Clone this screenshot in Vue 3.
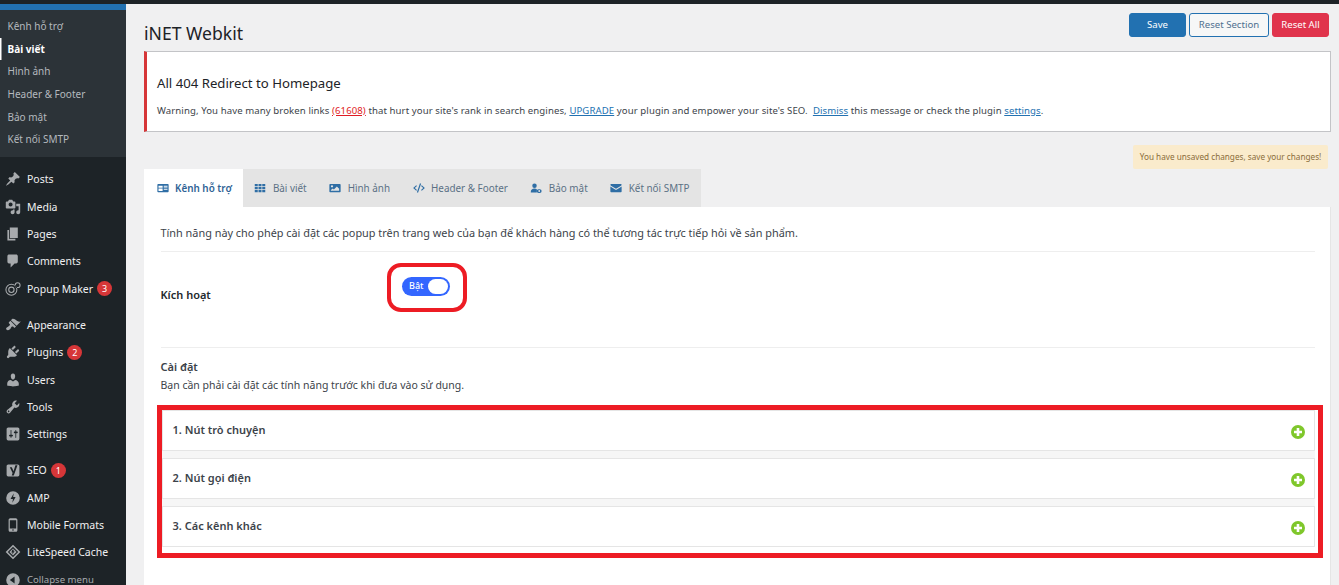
<script setup>
const sub = [
  { label: 'Kênh hỗ trợ' },
  { label: 'Bài viết', active: true },
  { label: 'Hình ảnh' },
  { label: 'Header & Footer' },
  { label: 'Bảo mật' },
  { label: 'Kết nối SMTP' }
]
const P = {
  posts: 'M10.44 3.02l1.82-1.82 6.36 6.35-1.83 1.82c-1.05-.68-2.48-.57-3.41.36l-.75.75c-.92.93-1.04 2.35-.35 3.41l-1.83 1.82-2.41-2.41-2.8 2.79c-.42.42-3.38 2.71-3.8 2.29s1.86-3.39 2.28-3.81l2.79-2.79L4.1 9.36l1.83-1.82c1.05.69 2.48.57 3.4-.36l.75-.75c.93-.92 1.05-2.35.36-3.41z',
  media: 'M13 11V4c0-.55-.45-1-1-1h-1.67L9 1H5L3.67 3H2c-.55 0-1 .45-1 1v7c0 .55.45 1 1 1h10c.55 0 1-.45 1-1zM7 4.5c1.38 0 2.5 1.12 2.5 2.5S8.38 9.5 7 9.5 4.5 8.38 4.5 7 5.62 4.5 7 4.5zM14 6h5v10.5c0 1.38-1.12 2.5-2.5 2.5S14 17.88 14 16.5s1.12-2.5 2.5-2.5c.17 0 .34.02.5.05V9h-3V6zm-4 8.05V13h2v3.5c0 1.38-1.12 2.5-2.5 2.5S7 17.88 7 16.5 8.12 14 9.5 14c.17 0 .34.02.5.05z',
  pages: 'M6 15V2h10v13H6zm-1 1h8v2H3V5h2v11z',
  comments: 'M5 2h9c1.1 0 2 .9 2 2v7c0 1.1-.9 2-2 2h-2l-5 5v-5H5c-1.1 0-2-.9-2-2V4c0-1.1.9-2 2-2z',
  popup: 'M8 3.500a7.500 7.500 0 1 0 0 15 7.500 7.500 0 0 0 0-15zm0 1.300a6.200 6.200 0 1 1 0 12.400A6.200 6.200 0 0 1 8 4.800zM8 7a4 4 0 1 0 0 8 4 4 0 0 0 0-8zm0 1.300a2.700 2.700 0 1 1 0 5.400 2.700 2.700 0 0 1 0-5.400zM15.800 1.500a3.700 3.700 0 1 0 0 7.400 3.700 3.700 0 0 0 0-7.400zm0 1.300a2.400 2.400 0 1 1 0 4.800 2.400 2.400 0 0 1 0-4.800z',
  appearance: 'M14.48 11.06L7.41 3.99l1.5-1.5c.5-.56 2.3-.47 3.51.32 1.21.8 1.43 1.28 2.91 2.1 1.18.64 2.45 1.26 4.45.85zm-.71.71L6.7 4.7 4.93 6.47c-.39.39-.39 1.02 0 1.41l1.06 1.06c.39.39.39 1.03 0 1.42-.6.6-1.43 1.11-2.21 1.69-.35.26-.7.53-1.01.84C1.43 13.23.91 14.96 1.99 16.03c1.07 1.07 2.8.56 4.16-.79.29-.3.58-.65.83-1.01.59-.78 1.09-1.61 1.69-2.21.39-.39 1.03-.39 1.42 0l1.06 1.06c.39.39 1.02.39 1.41 0z',
  plugins: 'M13.11 4.36L9.87 7.6 8 5.73l3.24-3.24c.35-.34 1.05-.2 1.56.32.52.51.66 1.21.31 1.55zm-8 1.77l.91-1.12 9.01 9.01-1.19.84c-.71.71-2.63 1.16-3.82 1.16H6.14L4.9 17.26c-.59.59-1.54.59-2.12 0-.59-.58-.59-1.53 0-2.12l1.24-1.24v-3.88c0-1.13.4-3.19 1.09-3.89zm7.26 3.97l3.24-3.24c.34-.35 1.04-.21 1.55.31.52.51.66 1.21.31 1.55l-3.24 3.25z',
  users: 'M10 9.25c-2.27 0-2.73-3.44-2.73-3.44C7 4.02 7.82 2 9.97 2c2.16 0 2.98 2.02 2.71 3.81 0 0-.41 3.44-2.68 3.44zm0 2.57L12.72 10c2.39 0 4.52 2.33 4.52 4.53v2.49s-3.65 1.13-7.24 1.13c-3.65 0-7.24-1.13-7.24-1.13v-2.49c0-2.25 1.94-4.48 4.47-4.48z',
  tools: 'M16.68 9.77c-1.34 1.34-3.3 1.67-4.95.99l-5.41 6.52c-.99.99-2.59.99-3.58 0s-.99-2.59 0-3.57l6.52-5.42c-.68-1.65-.35-3.61.99-4.95 1.28-1.28 3.12-1.62 4.72-1.06l-2.89 2.89 2.82 2.82 2.86-2.87c.53 1.58.18 3.39-1.08 4.65zM3.81 16.21c.4.39 1.04.39 1.43 0 .4-.4.4-1.04 0-1.43-.39-.4-1.03-.4-1.43 0-.39.39-.39 1.03 0 1.43z',
  settings: 'M18 16V4c0-1.1-.9-2-2-2H4c-1.1 0-2 .9-2 2v12c0 1.1.9 2 2 2h12c1.1 0 2-.9 2-2zM8 11h1c.55 0 1 .45 1 1s-.45 1-1 1H8v1.5c0 .28-.22.5-.5.5s-.5-.22-.5-.5V13H6c-.55 0-1-.45-1-1s.45-1 1-1h1V5.5c0-.28.22-.5.5-.5s.5.22.5.5V11zm5-2h-1c-.55 0-1-.45-1-1s.45-1 1-1h1V5.5c0-.28.22-.5.5-.5s.5.22.5.5V7h1c.55 0 1 .45 1 1s-.45 1-1 1h-1v5.500c0 .28-.22.5-.5.5s-.5-.22-.5-.5V9z',
  seo: 'M4 3h12c1.100 0 2 .9 2 2v11c0 1.100-.9 2-2 2H4c-1.100 0-2-.9-2-2V5c0-1.100.9-2 2-2zM13 4h2.600L11 16.800H8.400l1.100-3L6 6.500h2.500l2.200 5z',
  amp: 'M10 1.500a8.500 8.500 0 1 0 0 17 8.500 8.500 0 0 0 0-17zm-.8 14.300l.7-4.600H7.400c-.3 0-.4-.2-.3-.4l3.700-6.500.1.100-.7 4.500h2.500c.3 0 .4.200.3.400z',
  mobile: 'M6.500 1.500h7c1.100 0 2 .9 2 2v13c0 1.100-.9 2-2 2h-7c-1.100 0-2-.9-2-2v-13c0-1.100.9-2 2-2zM6 4v10.500h8V4zm4 11.200a1 1 0 1 0 0 2 1 1 0 0 0 0-2z',
  speed: 'M10 .8L19.200 10 10 19.200.8 10zm0 2.700L3.500 10l6.500 6.500 6.500-6.500zm0 2L14.500 10 10 14.500 5.500 10zm-.8 1.800L8 10.500h1.500l-.5 2.500 3-3.800h-1.500l.5-2z',
  collapse: 'M10 1.500a8.500 8.500 0 1 0 0 17 8.500 8.500 0 0 0 0-17zm2 4v9L6 10z'
}
const groups = [
  [
    { label: 'Posts', icon: 'posts' },
    { label: 'Media', icon: 'media' },
    { label: 'Pages', icon: 'pages' },
    { label: 'Comments', icon: 'comments' },
    { label: 'Popup Maker', icon: 'popup', badge: 3 }
  ],
  [
    { label: 'Appearance', icon: 'appearance' },
    { label: 'Plugins', icon: 'plugins', badge: 2 },
    { label: 'Users', icon: 'users' },
    { label: 'Tools', icon: 'tools' },
    { label: 'Settings', icon: 'settings' }
  ],
  [
    { label: 'SEO', icon: 'seo', badge: 1 },
    { label: 'AMP', icon: 'amp' },
    { label: 'Mobile Formats', icon: 'mobile' },
    { label: 'LiteSpeed Cache', icon: 'speed' }
  ]
]
const tabs = [
  { label: 'Kênh hỗ trợ', active: true, d: 'M1.500 2.500h13c.6 0 1 .4 1 1v9c0 .6-.4 1-1 1h-13c-.6 0-1-.4-1-1v-9c0-.6.4-1 1-1zM2 5v2.500h5.500V5zm7 0v1.200h5V5zM9 7.200v1.200h5V7.200zM2 8.500V12h5.500V8.500zM9 9.500v1.200h5V9.500z' },
  { label: 'Bài viết', d: 'M1 2.500h4v3H1zM6 2.500h4v3H6zM11 2.500h4v3h-4zM1 6.500h4v3H1zM6 6.500h4v3H6zM11 6.500h4v3h-4zM1 10.500h4v3H1zM6 10.500h4v3H6zM11 10.500h4v3h-4z' },
  { label: 'Hình ảnh', d: 'M1.500 2.500h13c.6 0 1 .4 1 1v9c0 .6-.4 1-1 1h-13c-.6 0-1-.4-1-1v-9c0-.6.4-1 1-1zM4 4.300a1.500 1.500 0 1 0 0 3 1.500 1.500 0 0 0 0-3zM2.500 11.500h11V9L10.500 6 6.500 10 5 8.500l-2.500 2.300z' },
  { label: 'Header & Footer', d: 'M9.300 1.800l1.500.4-4.100 12-1.500-.4zM4.300 4.300l1 1.100L2.400 8l2.900 2.600-1 1.100L.2 8zM11.700 4.300L15.800 8l-4.100 3.700-1-1.100L13.600 8l-2.900-2.600z' },
  { label: 'Bảo mật', d: 'M6 2a3 3 0 1 1 0 6 3 3 0 0 1 0-6zM1 13.500c0-3 2-4.700 5-4.700 1.200 0 2.300.3 3.100.8V14H1.500c-.3 0-.5-.2-.5-.5zM13 9.500a2.500 2.500 0 0 1 0 5h-1.500a2.500 2.500 0 0 1 0-5zm-.7 1.300a1.200 1.200 0 1 0 0 2.400 1.200 1.200 0 0 0 0-2.400z' },
  { label: 'Kết nối SMTP', d: 'M1.500 2.500h13c.7 0 1 .5 1 1.100 0 .5-.3 1-.8 1.300L8.600 8.800c-.4.200-.8.200-1.200 0L1.300 4.900C.8 4.600.5 4.100.5 3.600c0-.6.300-1.100 1-1.100zM.5 6l6.300 4c.7.500 1.700.5 2.400 0L15.500 6v6.500c0 .6-.4 1-1 1h-13c-.6 0-1-.4-1-1z' }
]
const rows = ['1. Nút trò chuyện', '2. Nút gọi điện', '3. Các kênh khác']
</script>

<template>
  <div class="page">
    <div class="topbar"></div>
    <div class="body">
      <aside class="side">
        <div class="current"></div>
        <ul class="submenu">
          <li v-for="s in sub" :key="s.label" :class="{ on: s.active }">{{ s.label }}</li>
        </ul>
        <div class="groups">
          <ul v-for="(g, i) in groups" :key="i" class="group">
            <li v-for="m in g" :key="m.label" class="item">
              <svg class="mi" viewBox="0 0 20 20"><path :d="P[m.icon]" fill-rule="evenodd" /></svg>
              <span>{{ m.label }}</span>
              <b v-if="m.badge" class="badge">{{ m.badge }}</b>
            </li>
          </ul>
          <div class="item collapse">
            <svg class="mi" viewBox="0 0 20 20"><path :d="P.collapse" fill-rule="evenodd" /></svg>
            <span>Collapse menu</span>
          </div>
        </div>
      </aside>

      <main class="main">
        <header class="head">
          <h1>iNET Webkit</h1>
          <div class="actions">
            <button class="btn save">Save</button>
            <button class="btn reset">Reset Section</button>
            <button class="btn all">Reset All</button>
          </div>
        </header>

        <section class="notice">
          <h2>All 404 Redirect to Homepage</h2>
          <p>
            Warning, You have many broken links <a class="red">(61608)</a> that hurt your site's rank in search engines,
            <a>UPGRADE</a> your plugin and empower your site's SEO.&nbsp; <a>Dismiss</a> this message or check the plugin
            <a>settings</a>.
          </p>
        </section>

        <div class="unsaved-row">
          <div class="unsaved">You have unsaved changes, save your changes!</div>
        </div>

        <nav class="tabs">
          <div v-for="t in tabs" :key="t.label" class="tab" :class="{ on: t.active }">
            <svg viewBox="0 0 16 16"><path :d="t.d" fill-rule="evenodd" /></svg>
            <span>{{ t.label }}</span>
          </div>
        </nav>

        <section class="panel">
          <p class="intro">Tính năng này cho phép cài đặt các popup trên trang web của bạn để khách hàng có thể tương tác trực tiếp hỏi về sản phẩm.</p>
          <div class="field">
            <label>Kích hoạt</label>
            <div class="switch-wrap">
              <div class="switch"><span>Bật</span><i></i></div>
              <div class="mark mark-round"></div>
            </div>
          </div>
          <div class="setup">
            <h3>Cài đặt</h3>
            <p>Bạn cần phải cài đặt các tính năng trước khi đưa vào sử dụng.</p>
          </div>
          <div class="accordion">
            <div v-for="r in rows" :key="r" class="row">
              <strong>{{ r }}</strong>
              <svg class="plus" viewBox="0 0 14 14">
                <circle cx="7" cy="7" r="7" fill="#7fc72b" />
                <path d="M7 3v8M3 7h8" stroke="#fff" stroke-width="2.600" fill="none" />
              </svg>
            </div>
            <div class="mark mark-box"></div>
          </div>
        </section>
      </main>
    </div>
  </div>
</template>

<style>
html, body { margin: 0; overflow: hidden; background: #f0f0f1; }
</style>

<style scoped>
* { box-sizing: border-box; }
.page {
  width: 1339px; height: 585px; overflow: hidden; display: flex; flex-direction: column;
  font-family: "Noto Sans", "Open Sans", sans-serif; color: #3c434a; background: #f0f0f1;
}
ul { list-style: none; margin: 0; padding: 0; }
.topbar { height: 4px; background: #1d2327; flex: none; }
.body { flex: 1; display: flex; min-height: 0; }

.side { width: 126px; flex: none; background: #1d2327; display: flex; flex-direction: column; }
.current { height: 6px; background: #2271b1; flex: none; }
.submenu { background: #2c3338; height: 147px; padding-top: 5.300px; flex: none; }
.submenu li {
  height: 22.600px; line-height: 22.600px; padding-left: 7.500px; font-size: 10px; color: #b4b9be;
}
.submenu li.on { color: #fff; font-weight: 700; box-shadow: inset 1.500px 0 0 #fff; }
.groups { padding-top: 8.800px; }
.group { padding-bottom: 9px; }
.item {
  height: 27.300px; display: flex; align-items: center; font-size: 10.500px; color: #f0f0f1; position: relative;
}
.mi { width: 16px; height: 16px; margin: 0 6px 0 5px; fill: #a7aaad; flex: none; }
.badge {
  width: 15px; height: 15px; border-radius: 50%; background: #d63638; color: #fff;
  font-size: 9px; font-weight: 400; line-height: 15px; text-align: center; margin-left: 4px;
}
.collapse { color: #a7aaad; font-size: 9.600px; margin-top: -9px; }

.main { flex: 1; min-width: 0; padding: 0 8px 0 18px; display: flex; flex-direction: column; }
.head { height: 47px; display: flex; justify-content: space-between; flex: none; }
h1 { margin: 17px 0 0; font-size: 17.600px; line-height: 24px; font-weight: 400; color: #1d2327; }
.actions { display: flex; gap: 3px; padding: 9px 2px 0 0; }
.btn {
  height: 24px; font: 9.600px/1 "Noto Sans", sans-serif; border-radius: 3px; border: 1px solid; padding: 0;
}
.save { width: 57px; background: #2271b1; border-color: #2271b1; color: #fff; }
.reset { width: 80px; background: #f6f7f7; border-color: #2271b1; color: #50708f; }
.all { width: 57px; background: #e0344c; border-color: #e0344c; color: #fff; }

.notice {
  height: 81px; flex: none; background: #fff; border: 1px solid #c3c4c7; border-left: 3px solid #d63638;
  padding: 21px 0 0 10px;
}
.notice h2 { margin: 0; font-size: 13.200px; line-height: 20px; font-weight: 400; color: #1d2327; }
.notice p { margin: 10px 0 0; font-size: 9.600px; letter-spacing: .088px; line-height: 16px; color: #3c434a; }
.notice a { color: #2271b1; text-decoration: underline; }
.notice a.red { color: #e01b24; }

.unsaved-row { display: flex; justify-content: flex-end; padding: 13px 3px 0 0; flex: none; }
.unsaved {
  width: 195px; height: 24px; background: #faebcc; color: #8a6d3b; font-size: 8.200px; line-height: 24px;
  text-align: center; border-radius: 2px; white-space: nowrap;
}

.tabs { display: flex; align-self: flex-start; background: #e4e4e4; height: 38px; flex: none; }
.tab { display: flex; align-items: center; gap: 6.500px; padding: 0 11.250px; font-size: 9.900px; color: #5b7184; height: 38px; }
.tab svg { width: 12px; height: 12px; fill: #2f6ea5; flex: none; }
.tab.on { background: #fff; color: #2f6395; font-weight: 600; padding-left: 12.500px; }

.panel {
  flex: 1; min-height: 0; background: #fff; border-right: 1px solid #e5e5e5;
  padding: 0 15px 0 16.500px;
}
.intro {
  margin: 0; height: 45px; padding-top: 18px; font-size: 10.880px; line-height: 16px; color: #3c434a;
  border-bottom: 1px solid #eee;
}
.field { height: 96px; display: flex; align-items: flex-start; border-bottom: 1px solid #eee; }
.field label { width: 241.500px; margin-top: 35px; font-size: 11px; line-height: 16px; font-weight: 600; color: #23282d; }
.switch-wrap { position: relative; margin-top: 25px; }
.switch {
  width: 48px; height: 19px; border-radius: 10px; background: #3366ff; position: relative;
  color: #fff; font-size: 9px; line-height: 17px; padding-left: 7px; font-weight: 500;
}
.switch i { position: absolute; right: 2px; top: 2px; width: 20px; height: 15px; border-radius: 8px; background: #fff; }
.mark { position: absolute; border: 4.500px solid #ed1c24; pointer-events: none; }
.mark-round { left: -15px; right: -17px; top: -14px; bottom: -16px; border-radius: 14px; }
.setup { padding-top: 11px; height: 57px; }
.setup h3 { margin: 0; font-size: 11px; line-height: 16px; font-weight: 600; color: #3c434a; }
.setup p { margin: 3px 0 0; font-size: 10.500px; line-height: 15px; color: #3c434a; }
.accordion { position: relative; margin: 5px 0 0 1px; width: 1153px; background: #f6f6f6; display: flex; flex-direction: column; gap: 7px; }
.row {
  height: 41px; background: #fff; border: 1px solid #e5e5e5; display: flex; align-items: center;
  justify-content: space-between; padding: 0 9px 0 10px;
}
.row strong { font-size: 11px; font-weight: 600; color: #3c434a; position: relative; top: -1px; }
.plus { width: 14px; height: 14px; position: relative; top: 1px; }
.mark-box { left: -5px; right: -8px; top: -5px; bottom: -11px; border-width: 5px; }
</style>
